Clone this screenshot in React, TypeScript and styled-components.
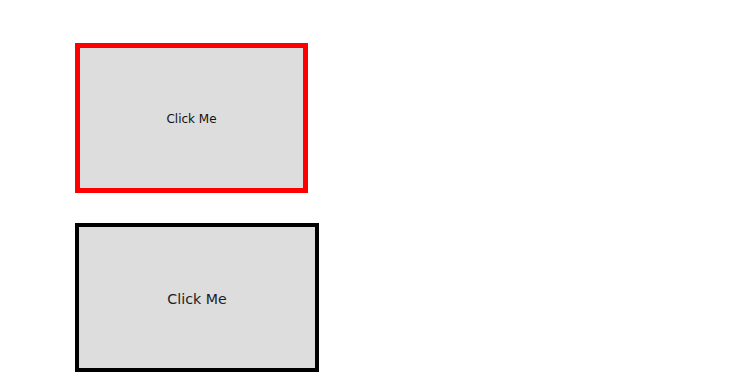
import styled, { createGlobalStyle } from "styled-components";

const GlobalStyle = createGlobalStyle`
  body {
    margin: 0;
    background: #ffffff;
  }
`;

const Page = styled.div`
  display: flex;
  flex-direction: column;
  align-items: flex-start;
  gap: 30px;
  padding: 43px 0 0 75px;
`;

const Button = styled.button<{ $variant: "red" | "black" }>`
  box-sizing: border-box;
  display: flex;
  align-items: center;
  justify-content: center;
  padding: 2px 0 0;
  width: ${(p) => (p.$variant === "red" ? "233px" : "244px")};
  height: ${(p) => (p.$variant === "red" ? "150px" : "149px")};
  background-color: #dddddd;
  border: ${(p) => (p.$variant === "red" ? "5px solid #ff0000" : "4px solid #000000")};
  color: ${(p) => (p.$variant === "red" ? "#111111" : "#1a1a2a")};
  font-family: "DejaVu Sans", Verdana, sans-serif;
  font-size: ${(p) => (p.$variant === "red" ? "12px" : "14.2px")};
  cursor: pointer;
`;

export default function App() {
  return (
    <>
      <GlobalStyle />
      <Page>
        <Button $variant="red">Click Me</Button>
        <Button $variant="black">Click Me</Button>
      </Page>
    </>
  );
}
